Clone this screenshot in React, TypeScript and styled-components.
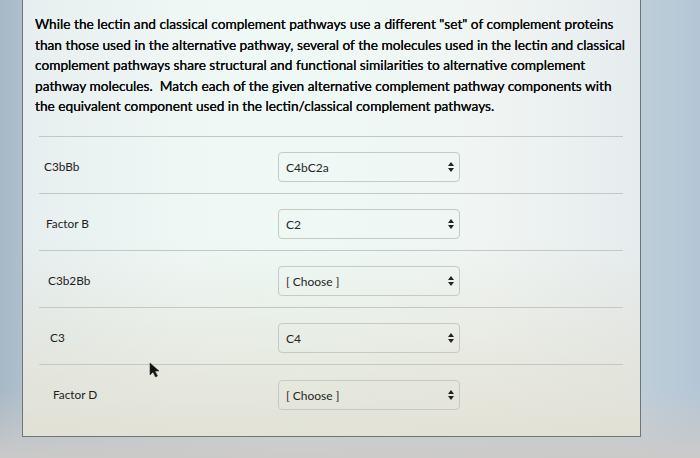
import React from "react";
import styled, { createGlobalStyle } from "styled-components";

const Global = createGlobalStyle`
  html, body { margin: 0; padding: 0; }
  body {
    width: 700px;
    height: 458px;
    overflow: hidden;
    background: #b6c6d4;
    font-family: Lato, "Open Sans", sans-serif;
  }
`;

const Screen = styled.div`
  width: 700px;
  height: 458px;
  box-sizing: border-box;
  padding: 0 59px 0 22px;
  display: flex;
  flex-direction: column;
  position: relative;
  background:
    linear-gradient(180deg, rgba(0,0,0,0) 85%, rgba(204,202,200,0.95) 100%),
    linear-gradient(90deg, #a7b8c6 0%, #aebfcc 3%, #c9d6dc 40%, #c0d0da 90%, #b4c6d6 100%);
`;

const Panel = styled.section`
  height: 437px;
  box-sizing: border-box;
  border: 1px solid #6e7679;
  border-top: none;
  background:
    linear-gradient(180deg, rgba(255,255,255,0) 0%, rgba(255,255,255,0) 55%, rgba(224,222,208,0.85) 100%),
    linear-gradient(90deg, #e6eeef 0%, #eff7f5 25%, #eef9f5 45%, #f0f5f3 75%, #e6ecee 100%);
  display: flex;
  flex-direction: column;
`;

const Question = styled.p`
  margin: 0;
  padding: 14px 0 0 12px;
  font-size: 13.7px;
  line-height: 20.6px;
  color: #0c0c0c;
  white-space: nowrap;
  text-shadow: 0 0 0.15px #000;
`;

const Answers = styled.div`
  margin: 19px 17px 0 16px;
  display: flex;
  flex-direction: column;
`;

const Row = styled.div`
  height: 57px;
  box-sizing: border-box;
  border-top: 1px solid #c4c8c4;
  display: flex;
  align-items: flex-start;
  padding-top: 15px;
`;

const Label = styled.div<{ $shift: number }>`
  width: 239px;
  box-sizing: border-box;
  padding: 7px 0 0 ${(p) => p.$shift}px;
  font-size: 11.8px;
  color: #1e1e1e;
`;

const Select = styled.div`
  width: 182px;
  height: 30px;
  box-sizing: border-box;
  border: 1px solid #c6cac2;
  border-radius: 4px;
  display: flex;
  align-items: center;
  justify-content: space-between;
  padding: 1px 5px 0 7px;
  font-size: 12px;
  color: #262626;
`;

const Arrows = styled.svg`
  width: 6px;
  height: 10px;
  display: block;
`;

const Cursor = styled.svg`
  position: absolute;
  left: 149px;
  top: 362px;
  width: 12px;
  height: 16px;
`;

const rows = [
  { label: "C3bBb", value: "C4bC2a", shift: 5 },
  { label: "Factor B", value: "C2", shift: 7 },
  { label: "C3b2Bb", value: "[ Choose ]", shift: 9 },
  { label: "C3", value: "C4", shift: 11 },
  { label: "Factor D", value: "[ Choose ]", shift: 14 },
];

export default function App() {
  return (
    <>
      <Global />
      <Screen>
        <Panel>
          <Question>
            While the lectin and classical complement pathways use a different "set" of complement proteins
            <br />
            than those used in the alternative pathway, several of the molecules used in the lectin and classical
            <br />
            complement pathways share structural and functional similarities to alternative complement
            <br />
            pathway molecules.&nbsp; Match each of the given alternative complement pathway components with
            <br />
            the equivalent component used in the lectin/classical complement pathways.
          </Question>
          <Answers>
            {rows.map((r) => (
              <Row key={r.label}>
                <Label $shift={r.shift}>{r.label}</Label>
                <Select>
                  <span>{r.value}</span>
                  <Arrows viewBox="0 0 6 10">
                    <path d="M3 0 L6 4 L0 4 Z M0 6 L6 6 L3 10 Z" fill="#222" />
                  </Arrows>
                </Select>
              </Row>
            ))}
          </Answers>
        </Panel>
        <Cursor viewBox="0 0 12 16">
          <path d="M1 1 L1 13 L4 10 L6.5 15 L8.5 14 L6 9 L10 9 Z" fill="#111" stroke="#333" strokeWidth="0.6" />
        </Cursor>
      </Screen>
    </>
  );
}
